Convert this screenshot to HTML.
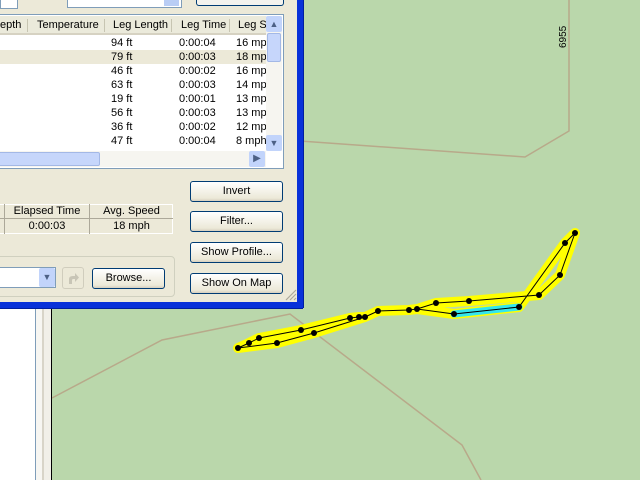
<!DOCTYPE html>
<html><head><style>
body{margin:0;width:640px;height:480px;overflow:hidden;position:relative;background:#bad7ab;font-family:"Liberation Sans",sans-serif;font-size:11px;color:#000}
.a{position:absolute;white-space:nowrap}
.btn{position:absolute;border:1px solid #003c74;border-radius:3px;background:linear-gradient(#fff,#ece9d8 85%,#d6d0c0);text-align:center;box-sizing:border-box;line-height:19px;white-space:nowrap}
.row{position:absolute;left:0;width:266px;height:14px;line-height:14px;white-space:nowrap}
.row span{position:absolute}
.hd{position:absolute;top:0;line-height:18px;white-space:nowrap}
.sep{position:absolute;top:3px;width:1px;height:13px;background:#c7c5b2}
</style></head><body>
<svg class="a" style="left:0;top:0" width="640" height="480">
<polyline points="300,141 525,157 569,131 569,0" fill="none" stroke="#b8a98a" stroke-width="1.5"/>
<polyline points="52,398 162,340 290,314 462,445 481,480" fill="none" stroke="#b8a98a" stroke-width="1.5"/>
<text x="0" y="0" transform="translate(566,48) rotate(-90)" font-family="Liberation Sans" font-size="10">6955</text>
<g fill="none" stroke="#ffff00" stroke-width="10" stroke-linejoin="round" stroke-linecap="round">
<polyline points="238,348 249,343 259,338 301,330 350,318 359,317 365,317 378,311 409,310 417,309 436,303 469,301 539,295 560,275 575,233 565,243 519,307 454,314 417,309 409,310 378,311 365,317 314,333 277,343 238,348"/>
</g>
<line x1="454" y1="314" x2="519" y2="307" stroke="#33e6ee" stroke-width="7" stroke-linecap="round"/>
<g fill="none" stroke="#000" stroke-width="1">
<polyline points="238,348 249,343 259,338 301,330 350,318 359,317 365,317 378,311 409,310 417,309 436,303 469,301 539,295 560,275 575,233 565,243 519,307 454,314 417,309 409,310 378,311 365,317 314,333 277,343 238,348"/>
</g>
<g fill="#000">
<circle cx="238" cy="348" r="3"/><circle cx="249" cy="343" r="3"/><circle cx="259" cy="338" r="3"/><circle cx="277" cy="343" r="3"/><circle cx="301" cy="330" r="3"/><circle cx="314" cy="333" r="3"/><circle cx="350" cy="318" r="3"/><circle cx="359" cy="317" r="3"/><circle cx="365" cy="317" r="3"/><circle cx="378" cy="311" r="3"/><circle cx="409" cy="310" r="3"/><circle cx="417" cy="309" r="3"/><circle cx="436" cy="303" r="3"/><circle cx="469" cy="301" r="3"/><circle cx="539" cy="295" r="3"/><circle cx="560" cy="275" r="3"/><circle cx="565" cy="243" r="3"/><circle cx="575" cy="233" r="3"/><circle cx="519" cy="307" r="3"/><circle cx="454" cy="314" r="3"/>
</g>
</svg>
<div class="a" style="left:0;top:308px;width:35px;height:172px;background:#fff"></div>
<div class="a" style="left:35px;top:308px;width:1px;height:172px;background:#7f9db9"></div>
<div class="a" style="left:36px;top:308px;width:15px;height:172px;background:#f1efe8;border-left:6px solid #f7f6f2;box-sizing:border-box"></div>
<div class="a" style="left:42px;top:308px;width:2px;height:172px;background:#d8d4c8"></div>
<div class="a" style="left:51px;top:308px;width:1px;height:172px;background:#000"></div>
<div class="a" style="left:0;top:0;width:297px;height:304px;background:#ece9d8"></div>
<div class="a" style="left:297px;top:0;width:6px;height:308px;background:#0831d9;border-right:1px solid #001ea0"></div>
<div class="a" style="left:0;top:302px;width:303px;height:6px;background:#0831d9;border-bottom:1px solid #001ea0"></div>
<div class="a" style="left:0;top:0;width:16px;height:8px;background:#fff;border:1px solid #7f9db9;border-top:none"></div>
<div class="a" style="left:67px;top:0;width:113px;height:7px;background:#fff;border:1px solid #7f9db9;border-top:none"></div>
<div class="a" style="left:164px;top:0;width:15px;height:6px;background:#b9cdf5"></div>
<div class="a" style="left:196px;top:0;width:86px;height:5px;border:1px solid #003c74;border-top:none;border-radius:0 0 3px 3px;background:#f4f3ee"></div>
<div class="a" style="left:0;top:14px;width:284px;height:155px;background:#fff;border:1px solid #7f9db9;border-left:none;box-sizing:border-box"></div>
<div class="a" style="left:0;top:16px;width:266px;height:19px;background:#ebeadb;border-bottom:2px solid #d6d2c2;box-sizing:border-box;overflow:hidden">
<span class="hd" style="left:0">epth</span><div class="sep" style="left:27px"></div>
<span class="hd" style="left:37px">Temperature</span><div class="sep" style="left:104px"></div>
<span class="hd" style="left:113px">Leg Length</span><div class="sep" style="left:171px"></div>
<span class="hd" style="left:181px">Leg Time</span><div class="sep" style="left:229px"></div>
<span class="hd" style="left:238px">Leg Speed</span>
</div>
<div class="a" style="left:0;top:36px;width:266px;height:115px;overflow:hidden">
<div class="row" style="top:0"><span style="left:111px">94 ft</span><span style="left:179px">0:00:04</span><span style="left:236px">16 mph</span></div>
<div class="row" style="top:14px;background:#ece9d8"><span style="left:111px">79 ft</span><span style="left:179px">0:00:03</span><span style="left:236px">18 mph</span></div>
<div class="row" style="top:28px"><span style="left:111px">46 ft</span><span style="left:179px">0:00:02</span><span style="left:236px">16 mph</span></div>
<div class="row" style="top:42px"><span style="left:111px">63 ft</span><span style="left:179px">0:00:03</span><span style="left:236px">14 mph</span></div>
<div class="row" style="top:56px"><span style="left:111px">19 ft</span><span style="left:179px">0:00:01</span><span style="left:236px">13 mph</span></div>
<div class="row" style="top:70px"><span style="left:111px">56 ft</span><span style="left:179px">0:00:03</span><span style="left:236px">13 mph</span></div>
<div class="row" style="top:84px"><span style="left:111px">36 ft</span><span style="left:179px">0:00:02</span><span style="left:236px">12 mph</span></div>
<div class="row" style="top:98px"><span style="left:111px">47 ft</span><span style="left:179px">0:00:04</span><span style="left:236px">8 mph</span></div>
</div>
<div class="a" style="left:266px;top:16px;width:16px;height:135px;background:#f6f5f0"></div>
<div class="a" style="left:266px;top:16px;width:16px;height:16px;background:#c2d4fb;border-radius:2px;text-align:center;line-height:16px;color:#4d6185;font-size:9px">▲</div>
<div class="a" style="left:267px;top:33px;width:14px;height:29px;background:#c6d6fb;border:1px solid #a3b8e6;border-radius:2px;box-sizing:border-box"></div>
<div class="a" style="left:266px;top:135px;width:16px;height:16px;background:#c2d4fb;border-radius:2px;text-align:center;line-height:16px;color:#4d6185;font-size:9px">▼</div>
<div class="a" style="left:0;top:151px;width:266px;height:16px;background:#f6f5f0"></div>
<div class="a" style="left:0;top:152px;width:100px;height:14px;background:#c6d6fb;border:1px solid #a3b8e6;border-left:none;border-radius:0 2px 2px 0;box-sizing:border-box"></div>
<div class="a" style="left:249px;top:151px;width:16px;height:16px;background:#c2d4fb;border-radius:2px;text-align:center;line-height:16px;color:#4d6185;font-size:10px">▶</div>
<div class="a" style="left:0;top:204px;width:173px;height:30px;border:1px solid #fff;border-left:none;box-sizing:border-box"></div>
<div class="a" style="left:0;top:204px;width:173px;height:15px;border-bottom:1px solid #aca899;box-sizing:border-box"></div>
<div class="a" style="left:4px;top:204px;width:1px;height:30px;background:#aca899"></div>
<div class="a" style="left:89px;top:204px;width:1px;height:30px;background:#aca899"></div>
<div class="a" style="left:5px;top:204px;width:84px;text-align:center;line-height:15px">Elapsed Time</div>
<div class="a" style="left:90px;top:204px;width:83px;text-align:center;line-height:15px">Avg. Speed</div>
<div class="a" style="left:5px;top:219px;width:84px;text-align:center;line-height:15px">0:00:03</div>
<div class="a" style="left:90px;top:219px;width:83px;text-align:center;line-height:15px">18 mph</div>
<div class="a" style="left:-5px;top:256px;width:178px;height:39px;border:1px solid #d0d0bf;border-radius:4px"></div>
<div class="a" style="left:0;top:267px;width:56px;height:21px;background:#fff;border:1px solid #7f9db9;border-left:none;box-sizing:border-box"></div>
<div class="a" style="left:39px;top:268px;width:16px;height:19px;background:#c2d4fb;border-radius:2px;text-align:center;line-height:19px;color:#4d6185;font-size:9px">▼</div>
<div class="a" style="left:62px;top:267px;width:22px;height:22px;border:1px solid #d0cdbd;border-radius:3px;box-sizing:border-box"></div>
<svg class="a" style="left:66px;top:271px" width="14" height="14"><path d="M3 13 L3 8 Q3 5 7 5 L9 5 L9 2 L13 6.5 L9 11 L9 8 L7 8 Q6 8 6 10 L6 13 Z" fill="#c8c5b6"/></svg>
<div class="btn" style="left:92px;top:268px;width:73px;height:21px">Browse...</div>
<div class="btn" style="left:190px;top:181px;width:93px;height:21px">Invert</div>
<div class="btn" style="left:190px;top:211px;width:93px;height:21px">Filter...</div>
<div class="btn" style="left:190px;top:242px;width:93px;height:21px">Show Profile...</div>
<div class="btn" style="left:190px;top:273px;width:93px;height:21px">Show On Map</div>
<svg class="a" style="left:284px;top:288px" width="13" height="13"><path d="M12 2 L2 12 M12 6 L6 12 M12 10 L10 12" stroke="#aca899" stroke-width="1.2"/></svg>
</body></html>
